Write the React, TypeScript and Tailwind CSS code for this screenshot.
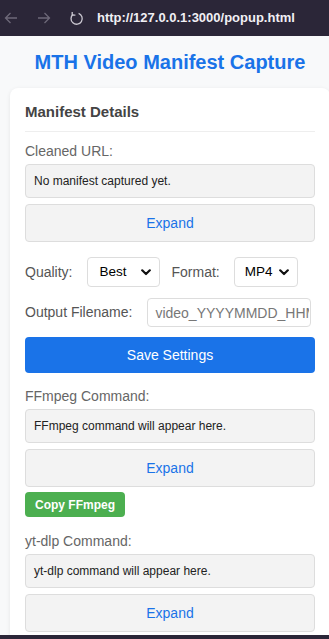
import React from "react";

const font = { fontFamily: '"Liberation Sans", Arial, sans-serif' };

function Chevron() {
  return (
    <svg width="10" height="7" viewBox="0 0 10 7" className="shrink-0">
      <path d="M1.2 1.3 L5 5 L8.8 1.3" fill="none" stroke="#111" strokeWidth="2.2" strokeLinecap="round" strokeLinejoin="round" />
    </svg>
  );
}

function OutputBox({ text }: { text: string }) {
  return (
    <div className="h-[34px] flex items-center px-[8px] bg-[#f3f3f3] border border-[#dddddd] rounded-[4px] text-[12px] text-[#222]">
      {text}
    </div>
  );
}

function ExpandButton() {
  return (
    <button className="mt-[6px] w-full h-[38px] flex items-center justify-center bg-[#f3f3f3] border border-[#dddddd] rounded-[4px] text-[14px] text-[#1a73e8]">
      Expand
    </button>
  );
}

export default function App() {
  return (
    <div className="w-[329px] h-[639px] flex flex-col overflow-hidden bg-[#f8f9fa]" style={font}>
      {/* browser bar */}
      <div className="h-[36px] shrink-0 bg-[#2b2638] flex items-center pl-[4px]">
        <svg width="14" height="14" viewBox="0 0 14 14" className="shrink-0">
          <path d="M13 7 H1.5 M6.5 2 L1.5 7 L6.5 12" fill="none" stroke="#6d6878" strokeWidth="1.3" />
        </svg>
        <svg width="14" height="14" viewBox="0 0 14 14" className="shrink-0 ml-[19px]">
          <path d="M1 7 H12.5 M7.5 2 L12.5 7 L7.5 12" fill="none" stroke="#6d6878" strokeWidth="1.3" />
        </svg>
        <svg width="15" height="15" viewBox="0 0 15 15" className="shrink-0 ml-[18px]">
          <path d="M4.2 3.2 A5.6 5.6 0 1 0 9.6 2.4" fill="none" stroke="#c9c6cf" strokeWidth="1.3" />
          <path d="M3.2 1 V4.2 H6.4" fill="none" stroke="#c9c6cf" strokeWidth="1.3" />
        </svg>
        <span className="ml-[13px] text-[13px] font-bold text-[#f1eff4] whitespace-nowrap">http://127.0.0.1:3000/popup.html</span>
      </div>

      <div className="flex-1 overflow-hidden">
        <div className="w-[340px]">
          <h1 className="pt-[14px] text-center text-[20px] leading-[24px] font-bold text-[#1a73e8]">
            MTH Video Manifest Capture
          </h1>

          <div className="mt-[14px] ml-[10px] w-[320px] bg-white rounded-[8px] shadow-[0_1px_4px_rgba(0,0,0,0.08)] px-[15px] pt-[15px] pb-[20px]">
            <h2 className="text-[15px] leading-[18px] font-bold text-[#444] pb-[10px] border-b border-[#eeeeee]">
              Manifest Details
            </h2>

            <div className="mt-[11px] text-[14px] leading-[16px] text-[#666]">Cleaned URL:</div>
            <div className="mt-[5px]">
              <OutputBox text="No manifest captured yet." />
            </div>
            <ExpandButton />

            <div className="mt-[15px] flex items-center text-[14px] text-[#555]">
              <span>Quality:</span>
              <div className="ml-[15px] w-[73px] h-[30px] flex items-center justify-between pl-[11px] pr-[8px] border border-[#dddddd] rounded-[4px] bg-white text-[13.5px] text-black">
                <span>Best</span>
                <Chevron />
              </div>
              <span className="ml-[11px]">Format:</span>
              <div className="ml-[14px] w-[64px] h-[30px] flex items-center justify-between pl-[10px] pr-[8px] border border-[#dddddd] rounded-[4px] bg-white text-[13.5px] text-black">
                <span>MP4</span>
                <Chevron />
              </div>
            </div>

            <div className="mt-[11px] flex items-center text-[14px] text-[#555]">
              <span>Output Filename:</span>
              <input
                readOnly
                placeholder="video_YYYYMMDD_HHMMSS"
                className="ml-[15px] w-[164px] h-[29px] pl-[7px] pr-[1px] border border-[#dddddd] rounded-[4px] bg-white text-[14px] placeholder:text-[#777] outline-none"
                style={font}
              />
            </div>

            <button className="mt-[10px] w-full h-[36px] rounded-[4px] bg-[#1a73e8] text-white text-[14px]">
              Save Settings
            </button>

            <div className="mt-[15px] text-[14px] leading-[16px] text-[#666]">FFmpeg Command:</div>
            <div className="mt-[5px]">
              <OutputBox text="FFmpeg command will appear here." />
            </div>
            <ExpandButton />
            <button className="mt-[5px] w-[100px] h-[25px] rounded-[4px] bg-[#4caf50] text-white text-[12px] font-bold">
              Copy FFmpeg
            </button>

            <div className="mt-[16px] text-[14px] leading-[16px] text-[#666]">yt-dlp Command:</div>
            <div className="mt-[5px]">
              <OutputBox text="yt-dlp command will appear here." />
            </div>
            <ExpandButton />
          </div>
        </div>
      </div>

      <div className="h-[4px] shrink-0 bg-[#2b2638]" />
    </div>
  );
}
